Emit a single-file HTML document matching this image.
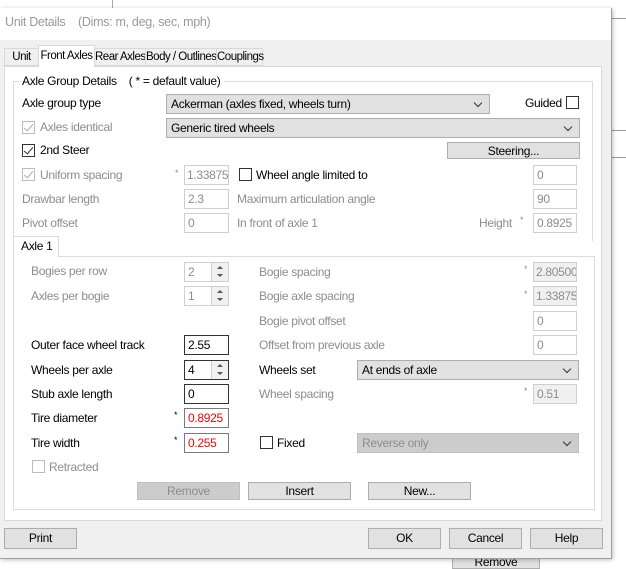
<html><head><style>
body{margin:0;width:626px;height:567px;background:#fff;position:relative;overflow:hidden;font-family:"Liberation Sans",sans-serif;font-size:12px;letter-spacing:-0.3px;color:#000}
.a{position:absolute;white-space:nowrap}
.g{color:#8d8d8d}
.in{position:absolute;border:1px solid #7a7a7a;background:#fff;line-height:18px;padding-left:3px;box-sizing:border-box;height:20px;overflow:hidden;white-space:nowrap}
.dis{border-color:#cfcfcf;color:#8d8d8d}
.sel{position:absolute;background:#e1e1e1;border:1px solid #adadad;box-sizing:border-box;height:20px;line-height:18px;padding-left:4px;white-space:nowrap}
.sel:after{content:"";position:absolute;right:8px;top:5px;width:5px;height:5px;border-right:1px solid #333;border-bottom:1px solid #333;transform:rotate(45deg)}
.btn{position:absolute;background:#e1e1e1;border:1px solid #adadad;box-sizing:border-box;text-align:center;line-height:17px;white-space:nowrap}
.cb{position:absolute;width:13px;height:13px;border:1px solid #333;box-sizing:border-box;background:#fff}
.ck:after{content:"";position:absolute;left:3px;top:0px;width:4px;height:8px;border-right:1px solid #333;border-bottom:1px solid #333;transform:rotate(40deg)}
.cg{border-color:#bcbcbc}.cg:after{border-color:#aaa}
.spin{position:absolute;width:16px;height:18px;right:0;top:0;border-left:1px solid #ccc;background:#f0f0f0}
.spin:before{content:"";position:absolute;left:5px;top:3px;border:3px solid transparent;border-bottom:3px solid #555;border-top:none}
.spin:after{content:"";position:absolute;left:5px;top:11px;border:3px solid transparent;border-top:3px solid #555;border-bottom:none}
.tab{position:absolute;top:48px;height:18px;border:1px solid #d9d9d9;background:#f0f0f0;line-height:17px;text-align:center;box-sizing:border-box;font-size:11.5px;letter-spacing:-0.5px;white-space:nowrap;overflow:visible}
</style></head><body>
<div class="a" style="left:112px;top:0;width:1px;height:8px;background:#aaa"></div>
<div class="a" style="left:611px;top:18px;width:15px;height:1px;background:#999"></div>
<div class="a" style="left:611px;top:130px;width:15px;height:26px;border-top:1px solid #999;border-bottom:1px solid #999"></div>
<div class="btn" style="left:452px;top:555px;width:88px;height:14px;line-height:13px">Remove</div>
<div class="a" style="left:0;top:8px;width:611px;height:549px;background:#f0f0f0;border:1px solid #a0a0a0;border-left:none;box-shadow:1px 1px 4px rgba(0,0,0,.25)"></div>
<div class="a" style="left:0;top:8px;width:611px;height:32px;background:#fff"></div>
<div class="a" style="left:5px;top:15px;color:#999;font-size:12.5px">Unit Details &nbsp;&nbsp;&nbsp;(Dims: m, deg, sec, mph)</div>
<div class="a" style="left:4px;top:66px;width:598px;height:455px;background:#fff;border:1px solid #d9d9d9;box-sizing:border-box"></div>
<div class="tab" style="left:4px;width:35px">Unit</div>
<div class="tab" style="left:38px;top:45px;width:57px;height:22px;border-bottom:none;background:#fff;line-height:20px">Front Axles</div>
<div class="tab" style="left:94px;width:52px">Rear Axles</div>
<div class="tab" style="left:145px;width:72px">Body / Outlines</div>
<div class="tab" style="left:216px;width:47px">Couplings</div>
<div class="a" style="left:13px;top:81px;width:580px;height:160px;border:1px solid #dcdcdc;border-bottom:none;box-sizing:border-box"></div>
<div class="a" style="left:19px;top:74px;background:#fff;padding:0 3px">Axle Group Details &nbsp;&nbsp;&nbsp;( * = default value)</div>
<div class="a" style="left:22px;top:96px">Axle group type</div>
<div class="sel" style="left:166px;top:94px;width:324px">Ackerman (axles fixed, wheels turn)</div>
<div class="a" style="left:525px;top:96px">Guided</div>
<div class="cb" style="left:566px;top:96px"></div>
<div class="cb ck cg" style="left:22px;top:121px"></div><div class="a g" style="left:40px;top:120px">Axles identical</div>
<div class="sel" style="left:166px;top:118px;width:414px">Generic tired wheels</div>
<div class="cb ck" style="left:22px;top:144px"></div><div class="a" style="left:40px;top:143px">2nd Steer</div>
<div class="btn" style="left:447px;top:142px;width:133px;height:17px">Steering...</div>
<div class="cb ck cg" style="left:22px;top:168px"></div><div class="a g" style="left:40px;top:168px">Uniform spacing</div>
<div class="a g" style="left:175px;top:168px;font-size:9px">*</div>
<div class="in dis" style="left:184px;top:165px;width:45px;padding-left:2px">1.33875</div>
<div class="cb" style="left:239px;top:168px"></div><div class="a" style="left:256px;top:168px">Wheel angle limited to</div>
<div class="in dis" style="left:533px;top:165px;width:44px">0</div>
<div class="a g" style="left:22px;top:192px">Drawbar length</div>
<div class="in dis" style="left:184px;top:189px;width:45px">2.3</div>
<div class="a g" style="left:237px;top:192px">Maximum articulation angle</div>
<div class="in dis" style="left:533px;top:189px;width:44px">90</div>
<div class="a g" style="left:22px;top:216px">Pivot offset</div>
<div class="in dis" style="left:184px;top:213px;width:45px">0</div>
<div class="a g" style="left:237px;top:216px">In front of axle 1</div>
<div class="a g" style="left:479px;top:216px">Height</div>
<div class="a g" style="left:520px;top:215px;font-size:9px">*</div>
<div class="in dis" style="left:533px;top:213px;width:44px">0.8925</div>
<div class="a" style="left:13px;top:256px;width:582px;height:254px;border:1px solid #dcdcdc;box-sizing:border-box"></div>
<div class="a" style="left:13px;top:236px;width:46px;height:21px;border:1px solid #dcdcdc;border-bottom:none;background:#fff;line-height:19px;padding-left:7px;box-sizing:border-box">Axle 1</div>
<div class="a g" style="left:31px;top:264px">Bogies per row</div>
<div class="in dis" style="left:184px;top:262px;width:45px">2<div class="spin"></div></div>
<div class="a g" style="left:259px;top:265px">Bogie spacing</div>
<div class="a g" style="left:524px;top:264px;font-size:9px">*</div>
<div class="in dis" style="left:533px;top:262px;width:44px;background:#f0f0f0;padding-left:2px">2.80500</div>
<div class="a g" style="left:31px;top:289px">Axles per bogie</div>
<div class="in dis" style="left:184px;top:286px;width:45px">1<div class="spin"></div></div>
<div class="a g" style="left:259px;top:289px">Bogie axle spacing</div>
<div class="a g" style="left:524px;top:289px;font-size:9px">*</div>
<div class="in dis" style="left:533px;top:286px;width:44px;background:#f0f0f0;padding-left:2px">1.33875</div>
<div class="a g" style="left:259px;top:314px">Bogie pivot offset</div>
<div class="in dis" style="left:533px;top:311px;width:44px">0</div>
<div class="a" style="left:31px;top:338px">Outer face wheel track</div>
<div class="in" style="left:184px;top:335px;width:45px;border-color:#333">2.55</div>
<div class="a g" style="left:259px;top:338px">Offset from previous axle</div>
<div class="in dis" style="left:533px;top:335px;width:44px">0</div>
<div class="a" style="left:31px;top:363px">Wheels per axle</div>
<div class="in" style="left:184px;top:360px;width:45px;border-color:#333">4<div class="spin"></div></div>
<div class="a" style="left:259px;top:363px">Wheels set</div>
<div class="sel" style="left:357px;top:360px;width:222px">At ends of axle</div>
<div class="a" style="left:31px;top:387px">Stub axle length</div>
<div class="in" style="left:184px;top:384px;width:45px;border-color:#333">0</div>
<div class="a g" style="left:259px;top:387px">Wheel spacing</div>
<div class="a g" style="left:524px;top:386px;font-size:9px">*</div>
<div class="in dis" style="left:533px;top:384px;width:44px;background:#f0f0f0">0.51</div>
<div class="a" style="left:31px;top:411px">Tire diameter</div>
<div class="a" style="left:174px;top:410px;font-size:9px">*</div>
<div class="in" style="left:184px;top:408px;width:45px;color:#f00">0.8925</div>
<div class="a" style="left:31px;top:436px">Tire width</div>
<div class="a" style="left:174px;top:435px;font-size:9px">*</div>
<div class="in" style="left:184px;top:433px;width:45px;color:#f00">0.255</div>
<div class="cb" style="left:260px;top:436px"></div><div class="a" style="left:277px;top:436px">Fixed</div>
<div class="sel" style="left:357px;top:433px;width:222px;background:#ccc;border-color:#bfbfbf;color:#8d8d8d">Reverse only</div>
<div class="cb cg" style="left:32px;top:460px"></div><div class="a g" style="left:49px;top:460px">Retracted</div>
<div class="btn" style="left:137px;top:482px;width:103px;height:18px;background:#ccc;border-color:#bfbfbf;color:#8d8d8d">Remove</div>
<div class="btn" style="left:248px;top:482px;width:103px;height:18px">Insert</div>
<div class="btn" style="left:368px;top:482px;width:103px;height:18px">New...</div>
<div class="btn" style="left:4px;top:528px;width:73px;height:21px;line-height:19px">Print</div>
<div class="btn" style="left:368px;top:528px;width:73px;height:21px;line-height:19px">OK</div>
<div class="btn" style="left:449px;top:528px;width:73px;height:21px;line-height:19px">Cancel</div>
<div class="btn" style="left:530px;top:528px;width:73px;height:21px;line-height:19px">Help</div>
</body></html>
